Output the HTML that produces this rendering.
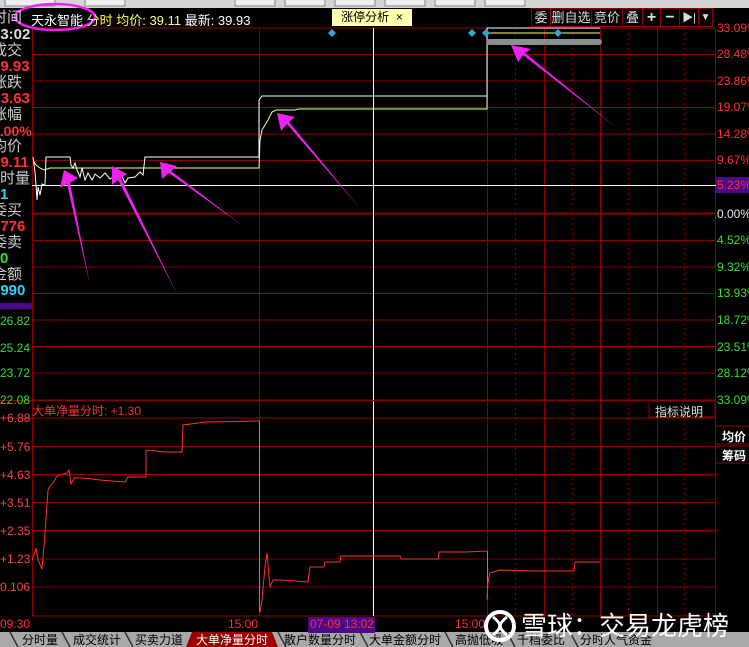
<!DOCTYPE html>
<html><head><meta charset="utf-8"><style>
body{margin:0;width:749px;height:647px;background:#000;overflow:hidden;position:relative;font-family:"Liberation Sans","Noto Sans CJK SC",sans-serif}
.a{position:absolute;white-space:nowrap}
.l{font-size:15px;line-height:16px;left:-8px}
.ax{font-size:12px;line-height:12px}
.b{position:absolute;top:8px;height:19px;border:1px solid #8b0000;box-sizing:border-box;color:#ddd;font-size:13px;line-height:18px;text-align:center;font-family:"Liberation Sans","Noto Sans CJK SC",sans-serif}
.t{position:absolute;top:633px;font-size:12px;line-height:14px;color:#000}
</style></head><body>
<svg class="a" style="left:0;top:0" width="749" height="647">
<rect x="0" y="0" width="749" height="8" fill="#d4d4d4"/>
<g fill="#eee" stroke="#888" stroke-width="1">
<rect x="5" y="-5" width="50" height="11"/><rect x="85" y="-5" width="40" height="11"/><rect x="235" y="-5" width="40" height="11"/><rect x="285" y="-5" width="40" height="11"/><rect x="335" y="-5" width="40" height="11"/><rect x="385" y="-5" width="40" height="11"/><rect x="435" y="-5" width="40" height="11"/><rect x="485" y="-5" width="40" height="11"/></g>
<g stroke="#8b0000" stroke-width="1">
<line x1="32" y1="28" x2="716" y2="28"/>
<line x1="32" y1="54.5" x2="716" y2="54.5"/><line x1="32" y1="81" x2="716" y2="81"/><line x1="32" y1="107.5" x2="716" y2="107.5"/><line x1="32" y1="134" x2="716" y2="134"/><line x1="32" y1="160.5" x2="716" y2="160.5"/>
<line x1="32" y1="240.5" x2="716" y2="240.5"/><line x1="32" y1="267" x2="716" y2="267"/><line x1="32" y1="293.5" x2="716" y2="293.5"/><line x1="32" y1="320" x2="716" y2="320"/><line x1="32" y1="346.5" x2="716" y2="346.5"/><line x1="32" y1="373" x2="716" y2="373"/><line x1="32" y1="400" x2="716" y2="400"/>
<line x1="0" y1="418" x2="716" y2="418"/><line x1="32" y1="446.5" x2="716" y2="446.5"/><line x1="32" y1="474.5" x2="716" y2="474.5"/><line x1="32" y1="502.5" x2="716" y2="502.5"/><line x1="32" y1="530.5" x2="716" y2="530.5"/><line x1="32" y1="559" x2="716" y2="559"/><line x1="32" y1="587" x2="716" y2="587"/><line x1="32" y1="616" x2="716" y2="616"/>
<line x1="32.5" y1="28" x2="32.5" y2="616"/><line x1="259.5" y1="28" x2="259.5" y2="616"/><line x1="487.5" y1="28" x2="487.5" y2="616"/>
<line x1="544.5" y1="28" x2="544.5" y2="616"/><line x1="600.5" y1="28" x2="600.5" y2="616"/><line x1="657.5" y1="28" x2="657.5" y2="616"/><line x1="715.5" y1="28" x2="715.5" y2="616"/>
<line x1="716" y1="426" x2="749" y2="426"/><line x1="716" y1="444" x2="749" y2="444"/><line x1="716" y1="446" x2="749" y2="446"/><line x1="716" y1="463" x2="749" y2="463"/>
</g>
<line x1="32" y1="213.5" x2="716" y2="213.5" stroke="#8b0000" stroke-width="2"/>
<g stroke="#8b0000" stroke-dasharray="2,3"><line x1="515.5" y1="28" x2="515.5" y2="616"/><line x1="572.5" y1="28" x2="572.5" y2="616"/><line x1="628.5" y1="28" x2="628.5" y2="616"/><line x1="684.5" y1="28" x2="684.5" y2="616"/></g>
<line x1="373.5" y1="28" x2="373.5" y2="616" stroke="#fff"/>
<line x1="32" y1="185.5" x2="716" y2="185.5" stroke="#fff"/>
<rect x="716" y="177" width="33" height="16" fill="#4b0a8a"/>
<polyline fill="none" stroke="#ffff88" stroke-width="1" points="33,160 36,165 40,168 44,170 50,168 70,168 259,168 260,140 262,130 265,125 268,120 272,112 276,110 295,110 298,109 487,109 487,33 600,33"/>
<polyline fill="none" stroke="#fff" stroke-width="1" points="33,157 35,172 36,185 37,200 38,187 40,195 42,184 44,185 45,185 46,157 70,157 71,165 73,168 75,163 77,170 80,177 82,168 85,180 88,173 92,180 95,174 100,178 105,173 110,179 115,176 122,176 125,183 128,178 135,177 140,172 143,175 145,157 259,157 259,100 262,96 487,96 487,28 600,28"/>
<g fill="#3aa0d0"><path d="M332,29 l4,4 -4,4 -4,-4z"/><path d="M472,29 l4,4 -4,4 -4,-4z"/><path d="M486,29 l4,4 -4,4 -4,-4z"/><path d="M558,29 l4,4 -4,4 -4,-4z"/></g>
<rect x="486" y="39" width="116" height="6" fill="#8a9090" rx="3"/>
<g fill="#ee22ee">
<polygon points="64,170 60,188 67,184 90,285 70,183 78,178"/>
<polygon points="112,166 112,185 118,180 178,296 121,178 127,174"/>
<polygon points="160,162 162,179 169,173 243,226 171,171 177,166"/>
<polygon points="277,113 281,131 287,124 359,207 289,122 295,117"/>
<polygon points="511,45 518,62 523,55 617,128 525,53 531,49"/>
</g>
<ellipse cx="55" cy="17" rx="40" ry="13" fill="none" stroke="#ee22ee" stroke-width="2.5"/>
<line x1="0" y1="400.5" x2="716" y2="400.5" stroke="#8b0000"/>
<rect x="649" y="401" width="66" height="16" fill="#000" stroke="#8b0000"/>
<polyline fill="none" stroke="#ff3030" stroke-width="1" points="32,560 34,555 36,548 38,560 42,569 45,533 48,490 50,486 53,483 57,476 67,473 69,470 71,484 74,478 84,478 100,480 125,482 128,477 146,477 146,450 165,452 182,452 183,425 206,422 259,421"/>
<line x1="259.5" y1="421" x2="259.5" y2="612" stroke="#30d030"/>
<polyline fill="none" stroke="#ff3030" points="260,612 262,600 265,567 267,553 270,587 273,580 282,580 308,582 310,567 324,567 325,562 340,562 341,556 400,556 401,559 438,559 439,552 466,552 487,551"/>
<line x1="487.5" y1="551" x2="487.5" y2="598" stroke="#30d030"/>
<polyline fill="none" stroke="#ff3030" points="487,600 488,582 490,573 500,570 536,571 574,571 575,562 600,562"/>
<rect x="0" y="632" width="749" height="15" fill="#a8a8a8"/>
<polygon points="186,647 192,632 272,632 278,647" fill="#9a0000"/>
<g stroke="#333" stroke-width="1.5"><line x1="10" y1="632" x2="18" y2="647"/><line x1="62" y1="632" x2="70" y2="647"/><line x1="125" y1="632" x2="133" y2="647"/><line x1="278" y1="632" x2="286" y2="647"/><line x1="360" y1="632" x2="368" y2="647"/><line x1="445" y1="632" x2="453" y2="647"/><line x1="507" y1="632" x2="515" y2="647"/><line x1="570" y1="632" x2="578" y2="647"/></g>
<rect x="308" y="617" width="67" height="16" fill="#4b0a8a"/>
</svg>
<div class="a" style="left:31px;top:10px;font-size:13px;color:#fff">天永智能 <span style="color:#ffff40">分时</span> <span style="color:#ffff40">均价:</span><span style="color:#ffff88"> 39.11</span> 最新:<span style="color:#fff"> 39.93</span></div>
<div class="a" style="left:332px;top:9px;width:80px;height:17px;background:#ffffb0;color:#000;font-size:12px;line-height:17px;text-align:center">涨停分析 &nbsp;×</div>
<div class="b" style="left:531px;width:20px">委</div>
<div class="b" style="left:550px;width:42px">删自选</div>
<div class="b" style="left:591px;width:32px">竞价</div>
<div class="b" style="left:622px;width:21px">叠</div>
<div class="b" style="left:642px;width:19px;font-weight:bold;font-size:16px">+</div>
<div class="b" style="left:660px;width:20px;font-weight:bold;font-size:16px">−</div>
<div class="b" style="left:679px;width:20px;font-size:11px">▶|</div>
<div class="b" style="left:698px;width:15px;font-size:10px">▼</div>
<div class="a l" style="top:10px;color:#ccc">时间</div>
<div class="a l" style="top:27px;color:#ddd;font-weight:bold">13:02</div>
<div class="a l" style="top:43px;color:#ccc">成交</div>
<div class="a l" style="top:59px;color:#ff3030;font-weight:bold">39.93</div>
<div class="a l" style="top:75px;color:#ccc">涨跌</div>
<div class="a l" style="top:91px;color:#ff3030;font-weight:bold">+3.63</div>
<div class="a l" style="top:107px;color:#ccc">涨幅</div>
<div class="a l" style="top:123px;color:#ff3030;font-weight:bold;font-size:14px">0.00%</div>
<div class="a l" style="top:139px;color:#ccc">均价</div>
<div class="a l" style="top:155px;color:#ff3030;font-weight:bold">39.11</div>
<div class="a l" style="top:171px;color:#ccc;left:0">时量</div>
<div class="a l" style="top:187px;color:#30d0ff;font-weight:bold;left:0">1</div>
<div class="a l" style="top:203px;color:#ccc">委买</div>
<div class="a l" style="top:219px;color:#ff3030;font-weight:bold">5776</div>
<div class="a l" style="top:235px;color:#ccc">委卖</div>
<div class="a l" style="top:251px;color:#30e030;font-weight:bold;left:0">0</div>
<div class="a l" style="top:267px;color:#ccc">金额</div>
<div class="a l" style="top:283px;color:#30d0ff;font-weight:bold">7990</div>
<div class="a" style="left:0;top:303px;width:32px;height:6px;background:#4b0a8a"></div>
<div class="a ax" style="left:0;top:315px;color:#30e030">26.82</div>
<div class="a ax" style="left:0;top:342px;color:#30e030">25.24</div>
<div class="a ax" style="left:0;top:367px;color:#30e030">23.72</div>
<div class="a ax" style="left:0;top:394px;color:#30e030">22.08</div>
<div class="a ax" style="left:0;top:412px;color:#ff4040">+6.88</div>
<div class="a ax" style="left:0;top:441px;color:#ff4040">+5.76</div>
<div class="a ax" style="left:0;top:469px;color:#ff4040">+4.63</div>
<div class="a ax" style="left:0;top:497px;color:#ff4040">+3.51</div>
<div class="a ax" style="left:0;top:525px;color:#ff4040">+2.35</div>
<div class="a ax" style="left:0;top:553px;color:#ff4040">+1.23</div>
<div class="a ax" style="left:0;top:581px;color:#ff4040">0.106</div>
<div class="a" style="left:32px;top:402px;font-size:12px;color:#ff3030">大单净量分时: +1.30</div>
<div class="a" style="left:655px;top:403px;font-size:12px;color:#ddd">指标说明</div>
<div class="a" style="left:722px;top:428px;font-size:12px;color:#fff;font-weight:bold">均价</div>
<div class="a" style="left:722px;top:447px;font-size:12px;color:#fff;font-weight:bold">筹码</div>
<div class="a ax" style="left:717px;top:22px;color:#ff3030">33.09%</div>
<div class="a ax" style="left:717px;top:48px;color:#ff3030">28.48%</div>
<div class="a ax" style="left:717px;top:75px;color:#ff3030">23.86%</div>
<div class="a ax" style="left:717px;top:101px;color:#ff3030">19.07%</div>
<div class="a ax" style="left:717px;top:128px;color:#ff3030">14.28%</div>
<div class="a ax" style="left:717px;top:154px;color:#ff3030">9.67%</div>
<div class="a ax" style="left:717px;top:179px;color:#ff3030">5.23%</div>
<div class="a ax" style="left:717px;top:208px;color:#ddeeff">0.00%</div>
<div class="a ax" style="left:717px;top:234px;color:#30e030">4.52%</div>
<div class="a ax" style="left:717px;top:261px;color:#30e030">9.32%</div>
<div class="a ax" style="left:717px;top:287px;color:#30e030">13.93%</div>
<div class="a ax" style="left:717px;top:314px;color:#30e030">18.72%</div>
<div class="a ax" style="left:717px;top:341px;color:#30e030">23.51%</div>
<div class="a ax" style="left:717px;top:367px;color:#30e030">28.12%</div>
<div class="a ax" style="left:717px;top:394px;color:#30e030">33.09%</div>
<div class="a ax" style="left:0;top:618px;color:#ff3030">09:30</div>
<div class="a ax" style="left:228px;top:618px;color:#ff3030">15:00</div>
<div class="a ax" style="left:310px;top:618px;color:#ff3030">07-09 13:02</div>
<div class="a ax" style="left:455px;top:618px;color:#ff3030">15:00</div>
<div class="t" style="left:22px">分时量</div>
<div class="t" style="left:73px">成交统计</div>
<div class="t" style="left:135px">买卖力道</div>
<div class="t" style="left:196px;color:#fff">大单净量分时</div>
<div class="t" style="left:284px">散户数量分时</div>
<div class="t" style="left:369px">大单金额分时</div>
<div class="t" style="left:455px">高抛低吸</div>
<div class="t" style="left:517px">千档委比</div>
<div class="t" style="left:580px">分时人气资金</div>
<svg class="a" style="left:483px;top:609px" width="34" height="34"><circle cx="17" cy="17" r="14" fill="none" stroke="#fff" stroke-width="4"/><path d="M10,8 C19,15 19,19 10,26 M24,8 C15,15 15,19 24,26" fill="none" stroke="#fff" stroke-width="3"/></svg>
<div class="a" style="left:521px;top:606px;font-size:26px;line-height:38px;color:#fff;font-family:'Noto Sans CJK SC',sans-serif">雪球：交易龙虎榜</div>
</body></html>
